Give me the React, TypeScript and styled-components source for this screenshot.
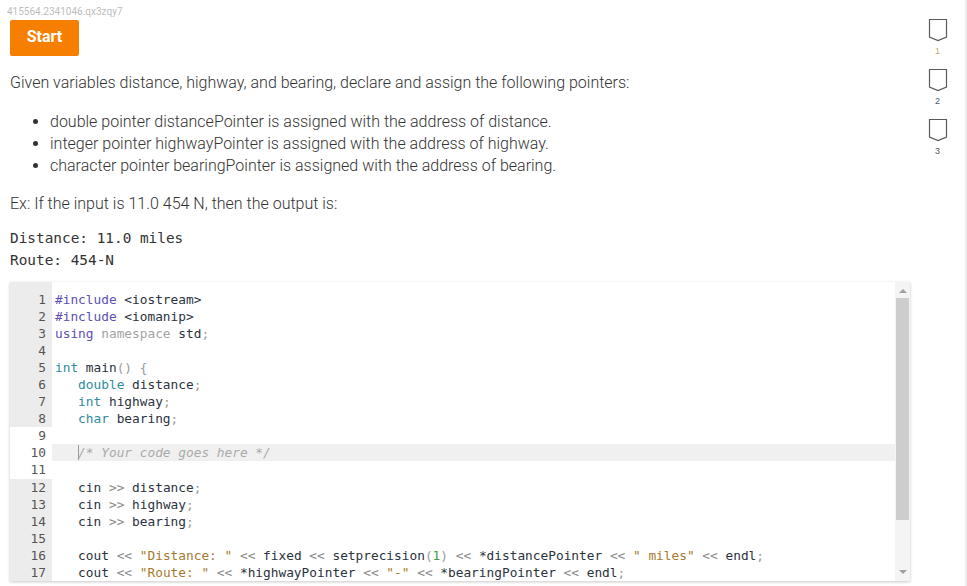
import React from "react";
import styled, { createGlobalStyle } from "styled-components";

const Global = createGlobalStyle`
  html, body { margin: 0; padding: 0; background: #fff; }
  body { font-family: Roboto, "Noto Sans", sans-serif; color: #333; }
`;

const Page = styled.div`
  display: flex;
  width: 967px;
  height: 586px;
  overflow: hidden;
`;

const Main = styled.div`
  width: 900px;
  padding-left: 10px;
  flex: none;
  display: flex;
  flex-direction: column;
`;

const IdText = styled.div`
  font-size: 10px;
  line-height: 12px;
  color: #bdbdbd;
  margin: 6px 0 2px -3px;
  font-family: Roboto, sans-serif;
`;

const StartButton = styled.button`
  width: 69px;
  height: 36px;
  border: none;
  border-radius: 2px;
  background: #f77f00;
  color: #fff;
  font-family: Roboto, sans-serif;
  font-weight: 700;
  font-size: 16px;
  line-height: 34px;
  padding: 0 0 2px;
  cursor: pointer;
`;

const Para = styled.p<{ $mt: number }>`
  margin: ${(p) => p.$mt}px 0 0;
  font-size: 16px;
  font-weight: 300;
  line-height: 22px;
  color: #333;
`;

const List = styled.ul`
  margin: 17px 0 0;
  padding-left: 40px;
  font-size: 16px;
  font-weight: 300;
  line-height: 22px;
  color: #333;
`;

const Output = styled.pre`
  margin: 12px 0 0;
  font-family: "DejaVu Sans Mono", monospace;
  font-size: 14.4px;
  line-height: 22px;
  color: #333;
`;

const Editor = styled.div`
  margin-top: 11px;
  height: 299px;
  display: flex;
  box-shadow: 0 1px 3px rgba(0, 0, 0, 0.22);
  background: #fff;
`;

const Lines = styled.div`
  flex: 1;
  padding: 9px 0 0;
  background: linear-gradient(to right, #ececec 42px, #fff 42px);
  font-family: "DejaVu Sans Mono", monospace;
  font-size: 12.8px;
  line-height: 17px;
`;

const Line = styled.div`
  display: flex;
  height: 17.05px;
`;

const Gutter = styled.div<{ $editable?: boolean }>`
  width: 42px;
  flex: none;
  box-sizing: border-box;
  padding-right: 6px;
  text-align: right;
  color: #555;
  background: ${(p) => (p.$editable ? "#fff" : "#ececec")};
`;

const Code = styled.div<{ $active?: boolean }>`
  flex: 1;
  padding-left: 3px;
  white-space: pre;
  color: #2b3340;
  background: ${(p) => (p.$active ? "#f0f0f0" : "transparent")};
  position: relative;
`;

const Cursor = styled.span`
  position: absolute;
  left: 26px;
  top: 1px;
  width: 1px;
  height: 15px;
  background: #999;
`;

const Tok = styled.span<{ $c: string; $italic?: boolean }>`
  color: ${(p) => p.$c};
  font-style: ${(p) => (p.$italic ? "italic" : "normal")};
`;

const Scrollbar = styled.div`
  width: 15px;
  flex: none;
  background: #f4f4f4;
  display: flex;
  flex-direction: column;
  align-items: center;
  padding: 4px 0 4px;
  box-sizing: border-box;
`;

const Arrow = styled.div<{ $down?: boolean }>`
  width: 0;
  height: 0;
  border-left: 4px solid transparent;
  border-right: 4px solid transparent;
  ${(p) =>
    p.$down
      ? "border-top: 4px solid #a0a0a0; margin-top: auto; margin-bottom: 3px;"
      : "border-bottom: 4px solid #a0a0a0; margin-top: 3px;"}
`;

const Thumb = styled.div`
  width: 13px;
  height: 222px;
  background: #cdcdcd;
  margin-top: 5px;
`;

const Sidebar = styled.div`
  flex: 1;
  display: flex;
  justify-content: flex-end;
`;

const Steps = styled.div`
  width: 55px;
  padding-top: 18px;
  display: flex;
  flex-direction: column;
  align-items: center;
  gap: 2px;
`;

const Step = styled.div`
  display: flex;
  flex-direction: column;
  align-items: center;
  height: 48px;
`;

const StepNum = styled.span<{ $c: string }>`
  font-size: 9px;
  line-height: 10px;
  color: ${(p) => p.$c};
  margin-top: 4px;
  font-family: "Liberation Sans", sans-serif;
`;

const EdgeLine = styled.div`
  width: 2px;
  background: #ededed;
`;

const C = {
  meta: "#5b50b3",
  plain: "#2b3340",
  kw: "#a3a3a3",
  type: "#2f8c9c",
  punct: "#999",
  op: "#8a8a8a",
  str: "#a67a2e",
  num: "#3f9c3f",
  com: "#aaa",
};

type T = [string, string, boolean?];
const codeLines: { toks: T[]; editable?: boolean; active?: boolean }[] = [
  { toks: [["#include", C.meta], [" <iostream>", C.plain]] },
  { toks: [["#include", C.meta], [" <iomanip>", C.plain]] },
  { toks: [["using", C.meta], [" namespace", C.kw], [" std", C.plain], [";", C.punct]] },
  { toks: [] },
  { toks: [["int", C.type], [" main", C.plain], ["() {", C.punct]] },
  { toks: [["   double", C.type], [" distance", C.plain], [";", C.punct]] },
  { toks: [["   int", C.type], [" highway", C.plain], [";", C.punct]] },
  { toks: [["   char", C.type], [" bearing", C.plain], [";", C.punct]] },
  { toks: [], editable: true },
  { toks: [["   /* Your code goes here */", C.com, true]], editable: true, active: true },
  { toks: [], editable: true },
  { toks: [["   cin ", C.plain], [">>", C.op], [" distance", C.plain], [";", C.punct]] },
  { toks: [["   cin ", C.plain], [">>", C.op], [" highway", C.plain], [";", C.punct]] },
  { toks: [["   cin ", C.plain], [">>", C.op], [" bearing", C.plain], [";", C.punct]] },
  { toks: [] },
  {
    toks: [
      ["   cout ", C.plain], ["<<", C.op], [" \"Distance: \" ", C.str], ["<<", C.op],
      [" fixed ", C.plain], ["<<", C.op], [" setprecision", C.plain], ["(", C.punct],
      ["1", C.num], [")", C.punct], [" ", C.plain], ["<<", C.op], [" *distancePointer ", C.plain],
      ["<<", C.op], [" \" miles\" ", C.str], ["<<", C.op], [" endl", C.plain], [";", C.punct],
    ],
  },
  {
    toks: [
      ["   cout ", C.plain], ["<<", C.op], [" \"Route: \" ", C.str], ["<<", C.op],
      [" *highwayPointer ", C.plain], ["<<", C.op], [" \"-\" ", C.str], ["<<", C.op],
      [" *bearingPointer ", C.plain], ["<<", C.op], [" endl", C.plain], [";", C.punct],
    ],
  },
];

const StepIcon = () => (
  <svg width="20" height="24" viewBox="0 0 20 24">
    <path d="M1.5 1.5 H18.5 V19 L10 22.5 L1.5 19 Z" fill="#fff" stroke="#5a5a5a" strokeWidth="1.2" />
  </svg>
);

export default function App() {
  return (
    <>
      <Global />
      <Page>
        <Main>
          <IdText>415564.2341046.qx3zqy7</IdText>
          <StartButton>Start</StartButton>
          <Para $mt={16}>
            Given variables distance, highway, and bearing, declare and assign the following pointers:
          </Para>
          <List>
            <li>double pointer distancePointer is assigned with the address of distance.</li>
            <li>integer pointer highwayPointer is assigned with the address of highway.</li>
            <li>character pointer bearingPointer is assigned with the address of bearing.</li>
          </List>
          <Para $mt={16}>Ex: If the input is 11.0 454 N, then the output is:</Para>
          <Output>{"Distance: 11.0 miles\nRoute: 454-N"}</Output>
          <Editor>
            <Lines>
              {codeLines.map((l, i) => (
                <Line key={i}>
                  <Gutter $editable={l.editable}>{i + 1}</Gutter>
                  <Code $active={l.active}>
                    {l.active && <Cursor />}
                    {l.toks.map((t, j) => (
                      <Tok key={j} $c={t[1]} $italic={t[2]}>
                        {t[0]}
                      </Tok>
                    ))}
                  </Code>
                </Line>
              ))}
            </Lines>
            <Scrollbar>
              <Arrow />
              <Thumb />
              <Arrow $down />
            </Scrollbar>
          </Editor>
        </Main>
        <Sidebar>
          <Steps>
            {[
              ["1", "#c8a66a"],
              ["2", "#4a5a70"],
              ["3", "#555"],
            ].map(([n, c]) => (
              <Step key={n}>
                <StepIcon />
                <StepNum $c={c}>{n}</StepNum>
              </Step>
            ))}
          </Steps>
          <EdgeLine />
        </Sidebar>
      </Page>
    </>
  );
}
